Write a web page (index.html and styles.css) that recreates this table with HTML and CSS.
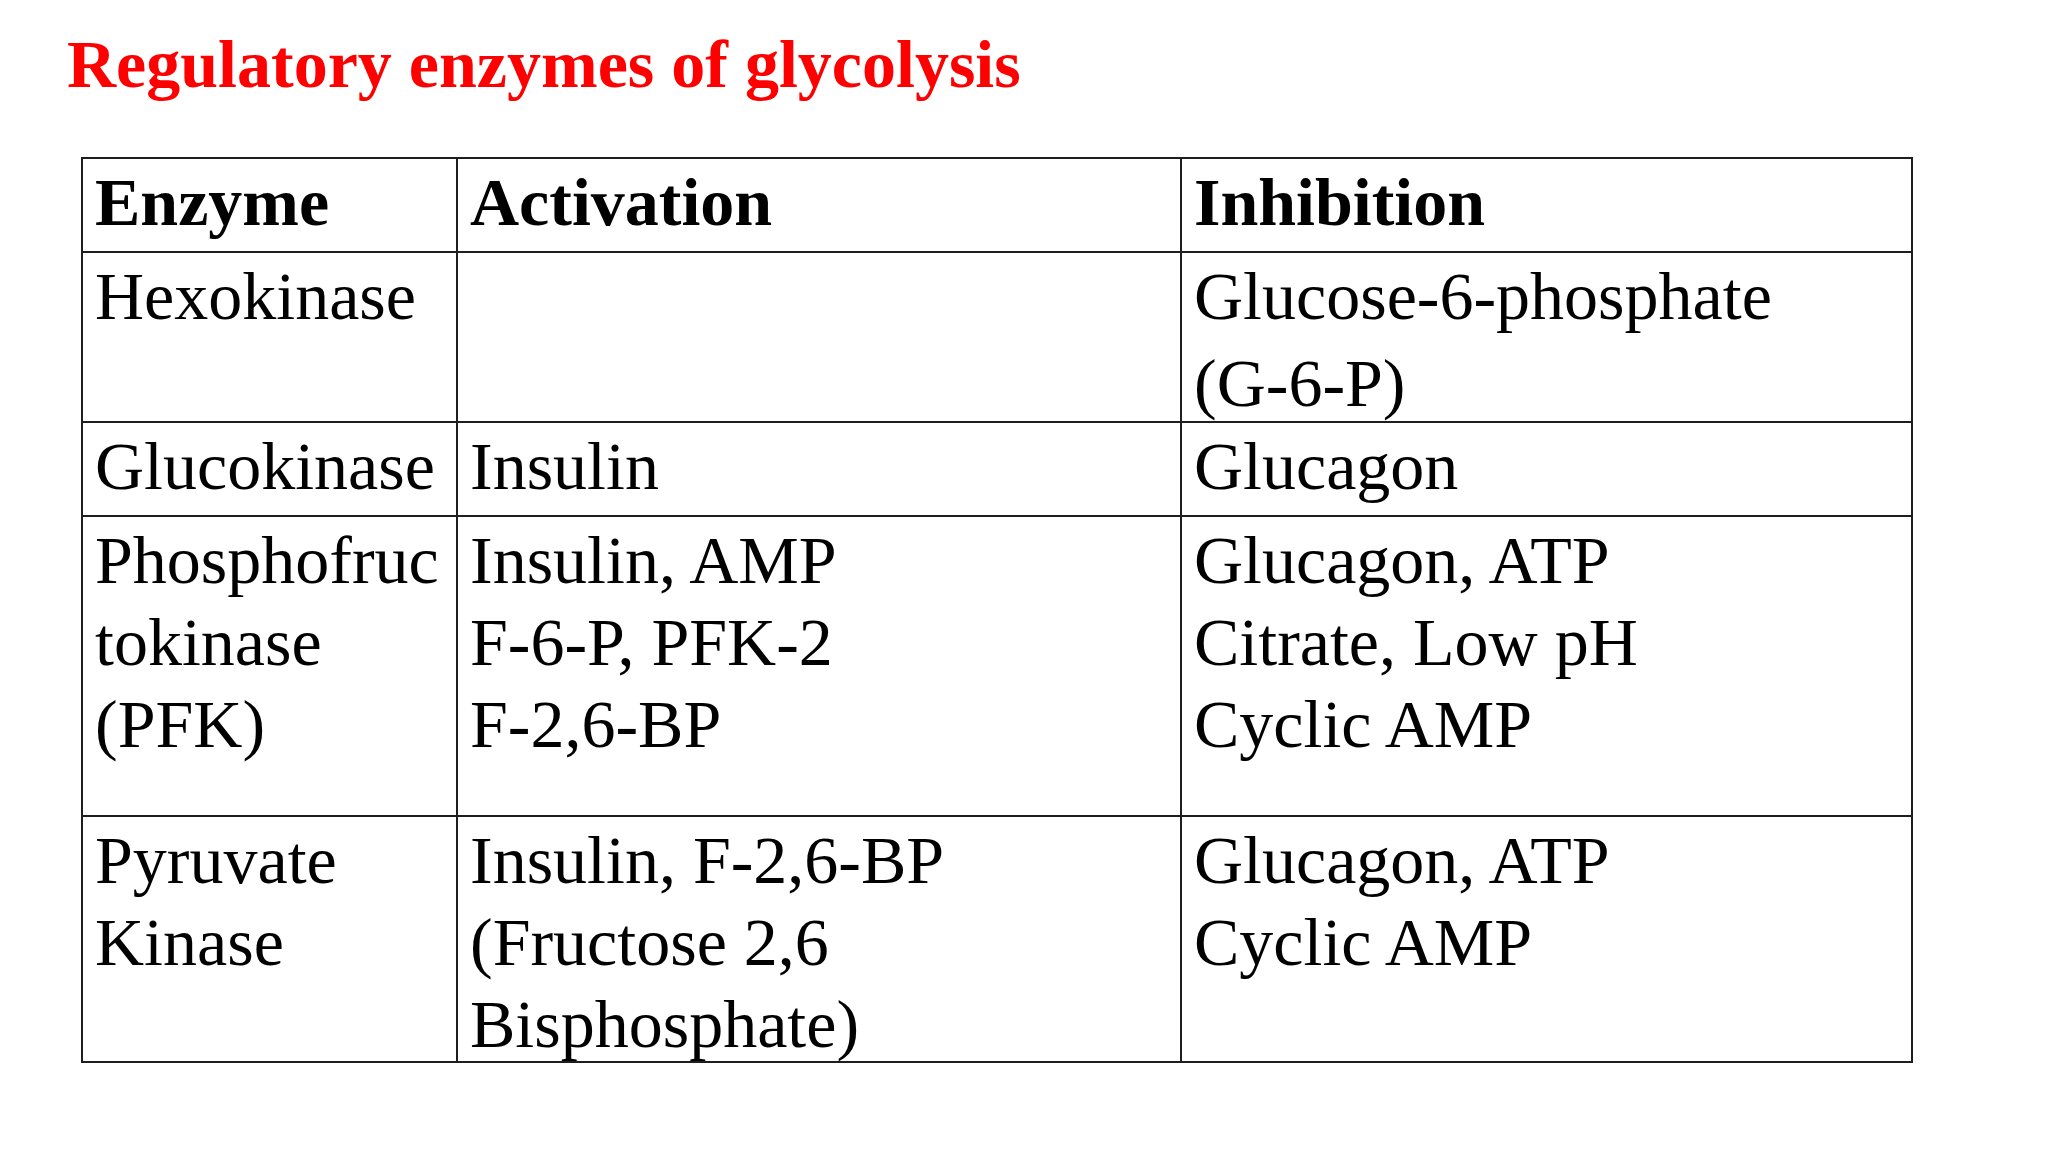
FILE: index.html
```html
<!DOCTYPE html>
<html lang="en">
<head>
<meta charset="utf-8">
<title>Regulatory enzymes of glycolysis</title>
<link rel="stylesheet" href="styles.css">
</head>
<body>
<div class="slide">
  <h1 class="title">Regulatory enzymes of glycolysis</h1>
  <table class="enzymes">
    <colgroup>
      <col class="col-enzyme">
      <col class="col-act">
      <col class="col-inh">
    </colgroup>
    <tr class="row-head">
      <th><div class="lines">Enzyme</div></th>
      <th><div class="lines">Activation</div></th>
      <th><div class="lines">Inhibition</div></th>
    </tr>
    <tr class="row-hexo">
      <td><div class="lines">Hexokinase</div></td>
      <td></td>
      <td class="loose"><div class="lines">Glucose-6-phosphate<br>(G-6-P)</div></td>
    </tr>
    <tr class="row-gluco">
      <td><div class="lines">Glucokinase</div></td>
      <td><div class="lines">Insulin</div></td>
      <td><div class="lines">Glucagon</div></td>
    </tr>
    <tr class="row-pfk">
      <td><div class="lines">Phosphofruc<br>tokinase<br>(PFK)</div></td>
      <td><div class="lines">Insulin, AMP<br>F-6-P, PFK-2<br>F-2,6-BP</div></td>
      <td><div class="lines">Glucagon, ATP<br>Citrate, Low pH<br>Cyclic AMP</div></td>
    </tr>
    <tr class="row-pyr">
      <td><div class="lines">Pyruvate<br>Kinase</div></td>
      <td><div class="lines">Insulin, F-2,6-BP<br>(Fructose 2,6<br>Bisphosphate)</div></td>
      <td><div class="lines">Glucagon, ATP<br>Cyclic AMP</div></td>
    </tr>
  </table>
</div>
</body>
</html>
```

FILE: styles.css
```css
html, body {
  margin: 0;
  padding: 0;
  background: #ffffff;
}

.slide {
  width: 2048px;
  height: 1152px;
  padding-top: 24px;
  box-sizing: border-box;
  font-family: "Liberation Serif", "Times New Roman", serif;
  color: #000000;
}

.title {
  margin: 0 0 0 67px;
  font-size: 68px;
  line-height: 80px;
  font-weight: bold;
  color: #ff0000;
}

.enzymes {
  margin: 53px 0 0 81px;
  border-collapse: collapse;
  table-layout: fixed;
  width: 1831px;
  font-size: 68px;
  line-height: 82px;
}

.col-enzyme { width: 375px; }
.col-act { width: 724px; }
.col-inh { width: 731px; }

.enzymes th,
.enzymes td {
  border: 2px solid #1e1e1e;
  padding: 2px 0 0 12px;
  text-align: left;
  vertical-align: top;
  white-space: nowrap;
}

.enzymes th {
  font-weight: bold;
}

.lines {
  margin-bottom: -10px;
}

.enzymes td.loose {
  line-height: 87px;
  padding-top: 0;
}

.row-head { height: 94px; }
.row-hexo { height: 170px; }
.row-gluco { height: 94px; }
.row-pfk { height: 300px; }
.row-pyr { height: 246px; }
```
